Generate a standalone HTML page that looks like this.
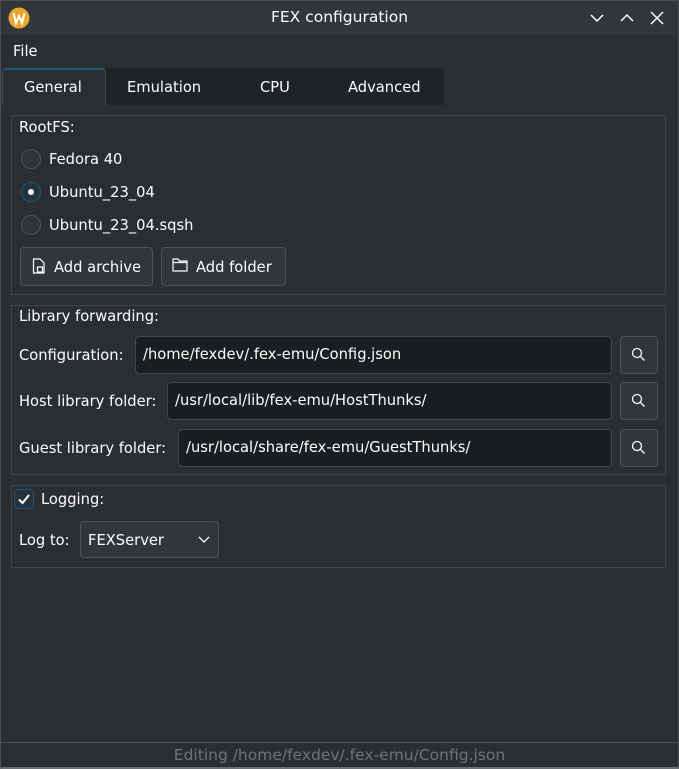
<!DOCTYPE html>
<html><head><meta charset="utf-8"><style>
*{box-sizing:border-box;margin:0;padding:0}
body{width:679px;height:769px;background:#2a2e32;font-family:"DejaVu Sans","Liberation Sans",sans-serif;font-size:14.7px;color:#fcfcfc;position:relative;overflow:hidden}
.a{position:absolute;white-space:nowrap}
.t{position:absolute;white-space:nowrap;margin-top:1px}
.grp{position:absolute;border:1px solid #40454b;border-radius:2px}
.btn{position:absolute;background:#31363b;border:1px solid #4d5258;border-radius:4px}
.inp{position:absolute;background:#1b1e20;border:1px solid #40454b;border-radius:4px;padding-left:7px;line-height:36px}
.radio{position:absolute;width:20px;height:20px;border-radius:50%;border:1px solid #4d5258;background:#2f3338}
</style></head><body>
<div class="a" style="left:0;top:0;width:679px;height:35px;background:#31363b"></div>
<svg class="a" style="left:8px;top:7px" width="22" height="22"><circle cx="11" cy="11" r="10.5" fill="#e9a730"/><path d="M5.5 6 L8 16 L11 9 L14 16 L16.5 6" stroke="#fff" stroke-width="2" fill="none"/></svg>
<div class="a" style="left:0;width:679px;top:8px;text-align:center;font-size:15.5px">FEX configuration</div>
<svg class="a" style="left:588px;top:10px" width="80" height="16" fill="none" stroke="#fcfcfc" stroke-width="1.5"><path d="M3 5 L9 11 L15 5"/><path d="M33 11 L39 5 L45 11"/><path d="M63 2 L75 14 M75 2 L63 14"/></svg>
<div class="t" style="left:13px;top:42px">File</div>
<div class="a" style="left:2px;top:68px;width:442px;height:37px;background:#1f2226;border-radius:4px 4px 0 0"></div>
<div class="a" style="left:2px;top:68px;width:104px;height:38px;background:#2a2e32;border-top:2px solid #1e5774;border-right:1px solid #40454b;border-left:1px solid #40454b;border-radius:4px 4px 0 0"></div>
<div class="t" style="left:24px;top:78px">General</div>
<div class="t" style="left:127px;top:78px">Emulation</div>
<div class="t" style="left:260px;top:78px">CPU</div>
<div class="t" style="left:348px;top:78px">Advanced</div>

<div class="grp" style="left:11px;top:115px;width:655px;height:180px"></div>
<div class="t" style="left:19px;top:118px">RootFS:</div>
<div class="radio" style="left:21px;top:149px"></div><div class="t" style="left:49px;top:150px">Fedora 40</div>
<div class="radio" style="left:21px;top:182px;border-color:#1e5774;background:#23323c"></div><div class="a" style="left:28px;top:189px;width:6px;height:6px;border-radius:50%;background:#fff"></div><div class="t" style="left:49px;top:183px">Ubuntu_23_04</div>
<div class="radio" style="left:21px;top:215px"></div><div class="t" style="left:49px;top:216px">Ubuntu_23_04.sqsh</div>
<div class="btn" style="left:20px;top:247px;width:133px;height:39px"></div>
<svg class="a" style="left:32px;top:258px" width="14" height="16" fill="none" stroke="#fcfcfc" stroke-width="1.2"><path d="M1.5 1 H8 L12 5 V15 H1.5 Z"/><rect x="5.5" y="9" width="5" height="5"/></svg>
<div class="t" style="left:54px;top:258px">Add archive</div>
<div class="btn" style="left:161px;top:247px;width:125px;height:39px"></div>
<svg class="a" style="left:172px;top:258px" width="16" height="14" fill="none" stroke="#fcfcfc" stroke-width="1.2"><path d="M1 1 H6 L7.5 3 H15 V13 H1 Z M1 4.5 H15"/></svg>
<div class="t" style="left:196px;top:258px">Add folder</div>

<div class="grp" style="left:11px;top:305px;width:655px;height:170px"></div>
<div class="t" style="left:19px;top:307px">Library forwarding:</div>
<div class="t" style="left:19px;top:346px">Configuration:</div>
<div class="inp" style="left:135px;top:336px;width:477px;height:38px">/home/fexdev/.fex-emu/Config.json</div>
<div class="t" style="left:19px;top:392px">Host library folder:</div>
<div class="inp" style="left:167px;top:382px;width:445px;height:38px">/usr/local/lib/fex-emu/HostThunks/</div>
<div class="t" style="left:19px;top:439px">Guest library folder:</div>
<div class="inp" style="left:178px;top:429px;width:434px;height:38px">/usr/local/share/fex-emu/GuestThunks/</div>
<div class="btn" style="left:620px;top:336px;width:38px;height:38px"></div>
<div class="btn" style="left:620px;top:382px;width:38px;height:38px"></div>
<div class="btn" style="left:620px;top:429px;width:38px;height:38px"></div>
<svg class="a" style="left:630px;top:346px" width="18" height="110" fill="none" stroke="#fcfcfc" stroke-width="1.3"><circle cx="7" cy="7" r="4.5"/><path d="M10.2 10.2 L14.5 14.5"/><circle cx="7" cy="53" r="4.5"/><path d="M10.2 56.2 L14.5 60.5"/><circle cx="7" cy="100" r="4.5"/><path d="M10.2 103.2 L14.5 107.5"/></svg>

<div class="grp" style="left:11px;top:485px;width:655px;height:83px"></div>
<div class="a" style="left:14px;top:489px;width:20px;height:20px;border-radius:4px;border:1px solid #1e5774;background:#23323c"></div>
<svg class="a" style="left:16px;top:491px" width="16" height="16" fill="none" stroke="#fff" stroke-width="2"><path d="M3 8.5 L6.5 12 L13 4"/></svg>
<div class="t" style="left:41px;top:490px">Logging:</div>
<div class="t" style="left:19px;top:531px">Log to:</div>
<div class="btn" style="left:80px;top:521px;width:139px;height:37px"></div>
<div class="t" style="left:88px;top:531px">FEXServer</div>
<svg class="a" style="left:197px;top:535px" width="14" height="10" fill="none" stroke="#fcfcfc" stroke-width="1.3"><path d="M2 2 L7 7 L12 2"/></svg>

<div class="a" style="left:0;top:742px;width:679px;height:1px;background:#4d5258"></div>
<div class="a" style="left:0;width:679px;top:746px;text-align:center;color:#6e7276;font-size:15.5px">Editing /home/fexdev/.fex-emu/Config.json</div>
<div class="a" style="left:0;top:0;width:679px;height:769px;border:1px solid #4a4f54;border-bottom:2px solid #6a6e72;pointer-events:none"></div>
</body></html>
